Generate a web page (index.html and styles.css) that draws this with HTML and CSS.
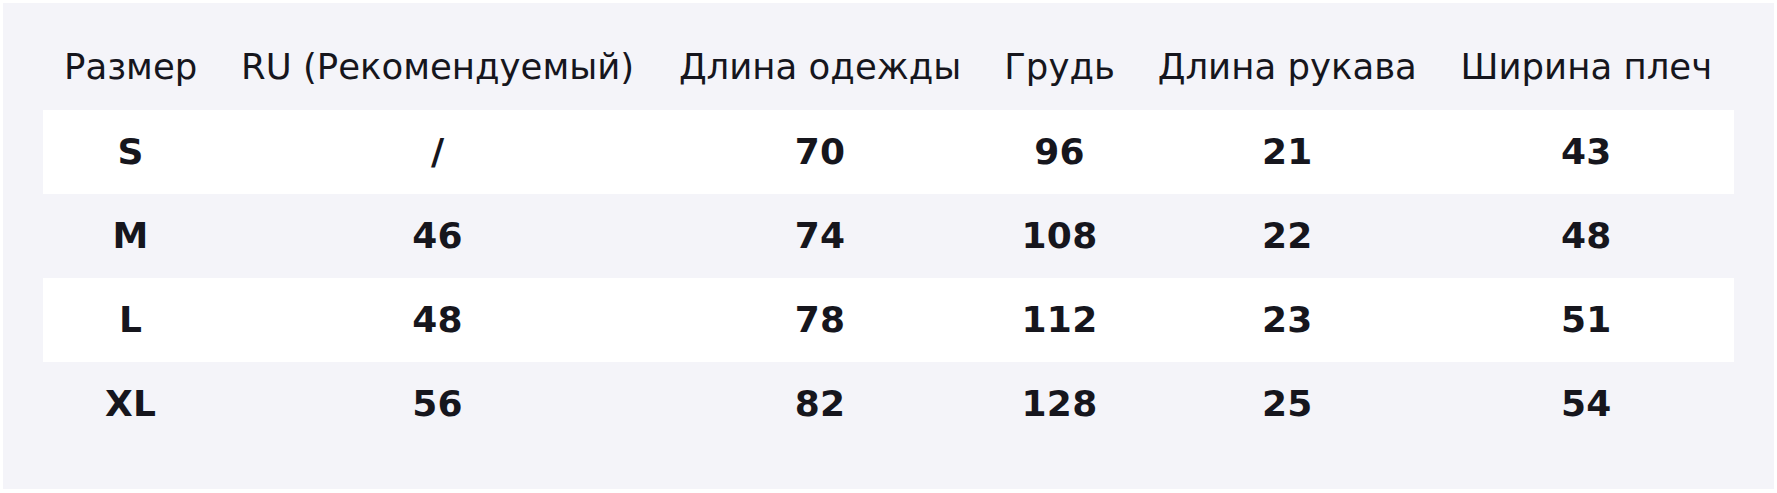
FILE: index.html
```html
<!DOCTYPE html>
<html lang="ru">
<head>
<meta charset="utf-8">
<title>Таблица размеров</title>
<link rel="stylesheet" href="styles.css">
</head>
<body>
<div class="panel">
  <table class="sizes">
    <thead>
      <tr>
        <th>Размер</th>
        <th>RU (Рекомендуемый)</th>
        <th>Длина одежды</th>
        <th>Грудь</th>
        <th>Длина рукава</th>
        <th>Ширина плеч</th>
      </tr>
    </thead>
    <tbody>
      <tr class="odd"><td>S</td><td>/</td><td>70</td><td>96</td><td>21</td><td>43</td></tr>
      <tr><td>M</td><td>46</td><td>74</td><td>108</td><td>22</td><td>48</td></tr>
      <tr class="odd"><td>L</td><td>48</td><td>78</td><td>112</td><td>23</td><td>51</td></tr>
      <tr><td>XL</td><td>56</td><td>82</td><td>128</td><td>25</td><td>54</td></tr>
    </tbody>
  </table>
</div>
</body>
</html>
```
FILE: styles.css
```css
html, body {
  margin: 0;
  padding: 0;
  background: #ffffff;
}
body {
  padding: 3px;
  font-family: "DejaVu Sans", "Noto Sans", sans-serif;
  color: #16161d;
}
.panel {
  background: #f4f4f9;
  padding: 43px 40px 42px;
  height: 486px;
  box-sizing: border-box;
}
.sizes {
  width: 100%;
  border-collapse: collapse;
}
.sizes th {
  font-weight: normal;
  font-size: 35.5px;
  line-height: 42px;
  padding: 0 20px 22px;
  text-align: center;
  white-space: nowrap;
}
.sizes td {
  font-weight: bold;
  font-size: 36px;
  letter-spacing: 0.3px;
  line-height: 42px;
  padding: 21px 20px;
  text-align: center;
}
.sizes tr.odd td {
  background: #ffffff;
}
```
